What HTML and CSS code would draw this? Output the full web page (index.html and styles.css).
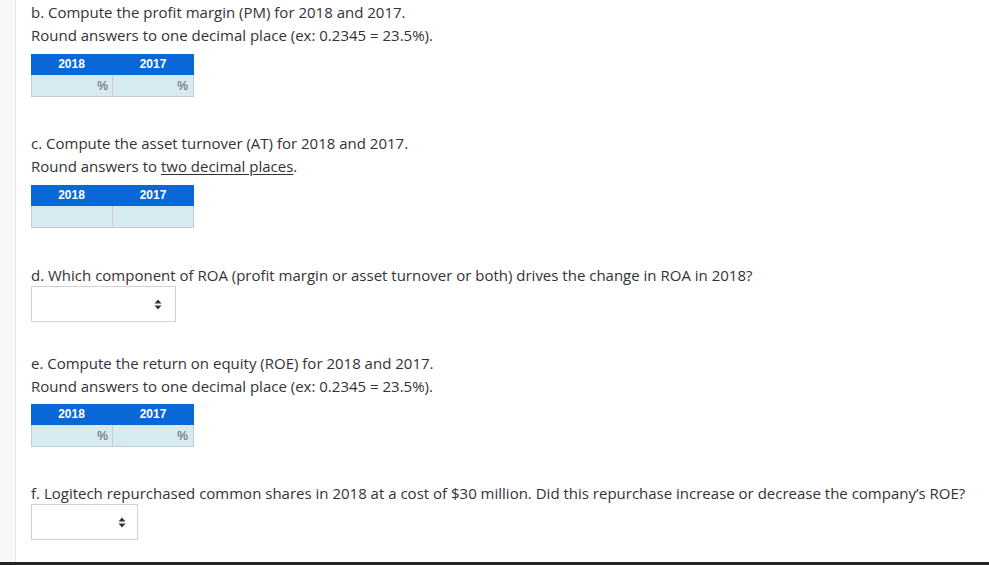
FILE: index.html
```html
<!DOCTYPE html>
<html>
<head>
<meta charset="utf-8">
<link rel="stylesheet" href="styles.css">
</head>
<body>
<div class="page">
  <aside class="rail"></aside>
  <main class="content">
    <section class="q q-b">
      <p>b. Compute the profit margin (PM) for 2018 and 2017.</p>
      <p>Round answers to one decimal place (ex: 0.2345 = 23.5%).</p>
      <div class="grid">
        <div class="th">2018</div><div class="th">2017</div>
        <div class="td">%</div><div class="td">%</div>
      </div>
    </section>
    <section class="q q-c">
      <p>c. Compute the asset turnover (AT) for 2018 and 2017.</p>
      <p>Round answers to <span class="ul">two decimal places</span>.</p>
      <div class="grid">
        <div class="th">2018</div><div class="th">2017</div>
        <div class="td"></div><div class="td"></div>
      </div>
    </section>
    <section class="q q-d">
      <p>d. Which component of ROA (profit margin or asset turnover or both) drives the change in ROA in 2018?</p>
      <div class="select sel-d"><svg width="8" height="11" viewBox="0 0 8 11"><path d="M4 0.5 L7.5 4.5 H0.5 Z M4 10.5 L7.5 6.5 H0.5 Z" fill="#333"/></svg></div>
    </section>
    <section class="q q-e">
      <p>e. Compute the return on equity (ROE) for 2018 and 2017.</p>
      <p>Round answers to one decimal place (ex: 0.2345 = 23.5%).</p>
      <div class="grid">
        <div class="th">2018</div><div class="th">2017</div>
        <div class="td">%</div><div class="td">%</div>
      </div>
    </section>
    <section class="q q-f">
      <p>f. Logitech repurchased common shares in 2018 at a cost of $30 million. Did this repurchase increase or decrease the company’s ROE?</p>
      <div class="select sel-f"><svg width="8" height="11" viewBox="0 0 8 11"><path d="M4 0.5 L7.5 4.5 H0.5 Z M4 10.5 L7.5 6.5 H0.5 Z" fill="#333"/></svg></div>
    </section>
  </main>
</div>
<div class="bottom-bar"></div>
</body>
</html>
```
FILE: styles.css
```css
html, body {
  margin: 0;
  padding: 0;
  background: #fff;
}
body {
  font-family: "Open Sans", "Liberation Sans", sans-serif;
  font-size: 15px;
  color: #333;
  height: 565px;
  overflow: hidden;
  display: flex;
  flex-direction: column;
}
.page {
  display: flex;
  height: 562px;
}
.rail {
  width: 15px;
  flex: none;
  background: #f7f8fa;
  border-right: 1px solid #e4e6ea;
}
.content {
  padding: 1px 0 0 15px;
  flex: 1;
}
.q p {
  margin: 0;
  line-height: 23px;
  white-space: nowrap;
}
.q-c { margin-top: 35px; }
.q-d { margin-top: 36px; }
.q-e { margin-top: 30px; }
.q-f { margin-top: 35px; }
.ul {
  text-decoration: underline;
  text-underline-offset: 2px;
}
.grid {
  margin-top: 7px;
  display: grid;
  grid-template-columns: 81px 82px;
  width: 163px;
}
.q-e .grid { margin-top: 6px; }
.th {
  background: #0a67d8;
  color: #fff;
  font-family: "Liberation Sans", Arial, sans-serif;
  font-weight: bold;
  font-size: 12px;
  height: 21px;
  line-height: 21px;
  text-align: center;
}
.td {
  background: #d6eaf1;
  height: 21px;
  border-bottom: 1px solid #c9cccf;
  border-left: 1px solid #c9cccf;
  font-family: "Liberation Sans", Arial, sans-serif;
  font-size: 12px;
  color: #555;
  text-align: right;
  line-height: 22px;
  padding-right: 4px;
}
.td:nth-child(4) { border-right: 1px solid #c9cccf; padding-right: 5px; }
.select {
  box-sizing: border-box;
  border: 1px solid #cfd3d7;
  display: flex;
  justify-content: flex-end;
  align-items: center;
  background: #fff;
  margin-top: -1px;
}
.sel-d {
  width: 145px;
  height: 36px;
  padding-right: 13px;
}
.sel-f {
  width: 107px;
  height: 36px;
  padding-right: 11px;
}
.bottom-bar {
  height: 3px;
  background: #252525;
}
```
